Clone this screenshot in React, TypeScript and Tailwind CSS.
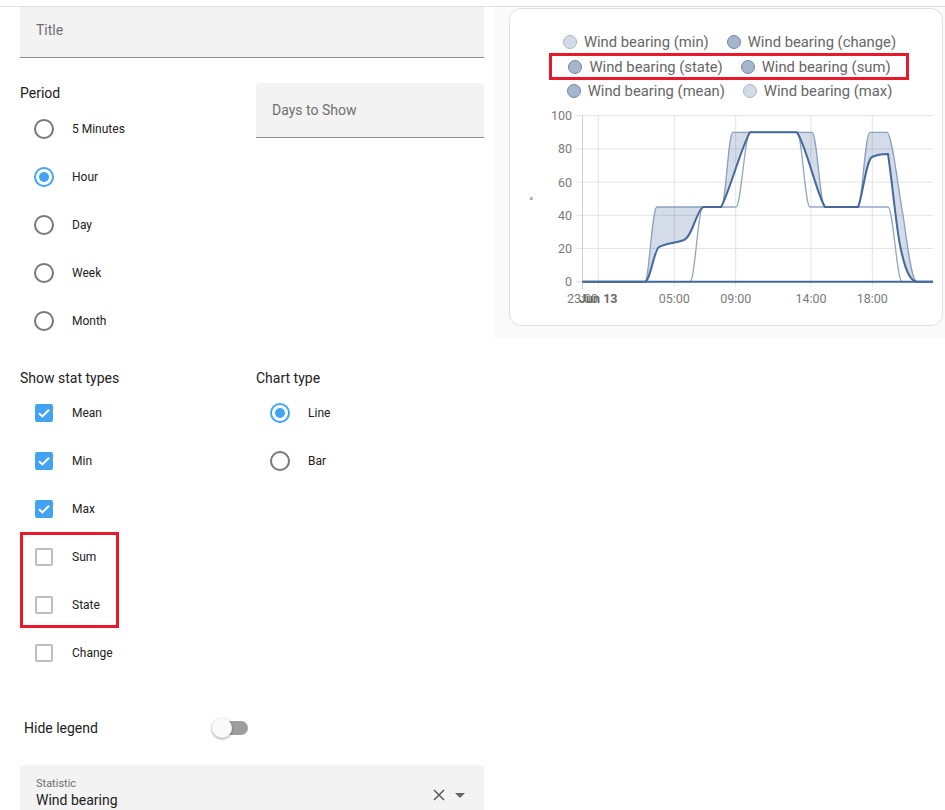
import React from "react";

const font = "font-['Roboto','Liberation_Sans',sans-serif]";

const Radio = ({ checked }: { checked?: boolean }) => (
  <span
    className={`flex h-5 w-5 items-center justify-center rounded-full border-2 ${
      checked ? "border-[#43a3f3]" : "border-[#777777]"
    }`}
  >
    {checked && <span className="h-[10px] w-[10px] rounded-full bg-[#43a3f3]" />}
  </span>
);

const Checkbox = ({ checked }: { checked?: boolean }) =>
  checked ? (
    <span className="flex h-[18px] w-[18px] items-center justify-center rounded-[2px] bg-[#43a3f3]">
      <svg viewBox="0 0 18 18" className="h-[18px] w-[18px]">
        <path d="M4 9.2 L7.4 12.4 L14 5.8" fill="none" stroke="white" strokeWidth="2" />
      </svg>
    </span>
  ) : (
    <span className="block h-[18px] w-[18px] rounded-[2px] border-2 border-[#bdbdbd]" />
  );

const RadioRow = ({ label, checked }: { label: string; checked?: boolean }) => (
  <div className="flex h-12 items-center pt-px">
    <span className="ml-[14px] flex">
      <Radio checked={checked} />
    </span>
    <span className="ml-[18px] text-xs text-[#212121]">{label}</span>
  </div>
);

const CheckRow = ({ label, checked }: { label: string; checked?: boolean }) => (
  <div className="flex h-12 items-center pt-px">
    <span className="ml-[15px] flex">
      <Checkbox checked={checked} />
    </span>
    <span className="ml-[19px] text-xs text-[#212121]">{label}</span>
  </div>
);

const legendRows: [string, boolean][][] = [
  [
    ["Wind bearing (min)", true],
    ["Wind bearing (change)", false],
  ],
  [
    ["Wind bearing (state)", false],
    ["Wind bearing (sum)", false],
  ],
  [
    ["Wind bearing (mean)", false],
    ["Wind bearing (max)", true],
  ],
];

const yTicks = [0, 20, 40, 60, 80, 100];
const yOf = (v: number) => 281.7 - 1.66 * v;
const xGrid = [598.3, 674.3, 735.7, 811, 872.3];

const maxPath =
  "M582.5,281.7 H645 C649,281.7 652,207 657,207 H721 C726,207 728,132.3 733,132.3 H812 C817,132.3 820,207 825,207 H858 C862,207 865,132.3 870,132.3 H887 C892,132.3 899,195 903,215 C907,240 911,281.7 917,281.7 H933";
const meanPath =
  "M582.5,281.7 H645 C650,281.7 654,250 659,247 C664,244 675,243 684,240 C692,237 696,212 703,207 H721 C728,196 742,145 750,132.3 H797 C806,145 817,195 825,207 H858 C862,200 866,160 872,157 C878,154 884,154 888,154 C892,180 896,225 900,245 C904,265 909,281.7 917,281.7 H933";
const minPath =
  "M582.5,281.7 H690 C695,281.7 698,207 703,207 H736 C741,207 745,132.3 750,132.3 H797 C802,132.3 805,207 810,207 H888 C893,207 897,281.7 902,281.7 H933";

const Chart = () => (
  <svg viewBox="510 103 432 207" width={432} height={207} className="block">
    <defs>
      <mask id="band">
        <path d={maxPath + " Z"} fill="white" />
        <path d={meanPath + " Z"} fill="black" />
      </mask>
    </defs>
    {yTicks.map((v) => (
      <g key={v}>
        <line x1={576} x2={933} y1={yOf(v)} y2={yOf(v)} stroke="#e3e3e3" strokeWidth={1} />
        <text x={572} y={yOf(v) + 4.5} textAnchor="end" fontSize={12.5} fill="#7a7a7a" fontFamily="Roboto, sans-serif">
          {v}
        </text>
      </g>
    ))}
    {xGrid.map((x) => (
      <line key={x} x1={x} x2={x} y1={115.7} y2={287} stroke="#e3e3e3" strokeWidth={1} />
    ))}
    <line x1={582.5} x2={582.5} y1={115.7} y2={289} stroke="#cfcfcf" strokeWidth={1} />
    <text x={529} y={206} fontSize={12} fill="#8a8a8a" fontFamily="Roboto, sans-serif">
      °
    </text>
    <rect x={580} y={110} width={360} height={180} fill="rgba(70,108,158,0.24)" mask="url(#band)" />
    <path d={minPath} fill="none" stroke="#93a7c3" strokeWidth={1.3} />
    <path d={maxPath} fill="none" stroke="#8aa0bf" strokeWidth={1.3} />
    <path d={meanPath} fill="none" stroke="#45699a" strokeWidth={2} />
    <path d="M582.5,281.7 H933" fill="none" stroke="#45699a" strokeWidth={2} />
    <g fontSize={12.5} fill="#7a7a7a" fontFamily="Roboto, sans-serif" textAnchor="middle">
      <text x={582.5} y={302.5}>23:00</text>
      <text x={598.3} y={302.5} fontWeight={700} fill="#6a6a6a">
        Jun 13
      </text>
      <text x={674.3} y={302.5}>05:00</text>
      <text x={735.7} y={302.5}>09:00</text>
      <text x={811} y={302.5}>14:00</text>
      <text x={872.3} y={302.5}>18:00</text>
    </g>
  </svg>
);

export default function App() {
  return (
    <div className={`relative h-[810px] w-[945px] overflow-hidden bg-white ${font}`}>
      <div className="h-[7px] border-b border-[#e0e0e0]" />
      <div className="flex">
        {/* editor column */}
        <div className="w-[494px] pl-5 pr-[10px]">
          <div className="h-[51px] border-b border-[#8c8c8c] bg-[#f3f3f3] pl-4 pt-[15px] text-sm leading-4 text-[#707070]">
            Title
          </div>

          <div className="mt-[25px] grid grid-cols-[236px_228px]">
            <div>
              <div className="h-5 text-sm leading-5 text-[#212121]">Period</div>
              <div className="mt-px">
                <RadioRow label="5 Minutes" />
                <RadioRow label="Hour" checked />
                <RadioRow label="Day" />
                <RadioRow label="Week" />
                <RadioRow label="Month" />
              </div>
            </div>
            <div>
              <div className="h-[55px] rounded-t-[4px] border-b border-[#8c8c8c] bg-[#f3f3f3] pl-4 pt-[19px] text-sm leading-4 text-[#707070]">
                Days to Show
              </div>
            </div>
          </div>

          <div className="mt-6 grid grid-cols-[236px_228px]">
            <div>
              <div className="h-5 text-sm leading-5 text-[#212121]">Show stat types</div>
              <CheckRow label="Mean" checked />
              <CheckRow label="Min" checked />
              <CheckRow label="Max" checked />
              <CheckRow label="Sum" />
              <CheckRow label="State" />
              <CheckRow label="Change" />
            </div>
            <div>
              <div className="h-5 text-sm leading-5 text-[#212121]">Chart type</div>
              <RadioRow label="Line" checked />
              <RadioRow label="Bar" />
            </div>
          </div>

          <div className="mt-8 flex h-10 items-center pl-1">
            <span className="w-[188px] text-sm text-[#212121]">Hide legend</span>
            <span className="relative flex h-5 w-9 items-center">
              <span className="ml-px h-[14px] w-[35px] rounded-full bg-[#9e9e9e]" />
              <span className="absolute left-0 top-0 h-5 w-5 rounded-full bg-[#fafafa] shadow-[0_1px_3px_rgba(0,0,0,0.4)]" />
            </span>
          </div>

          <div className="mt-[17px] flex h-[56px] items-start rounded-t-[4px] bg-[#f3f3f3] pl-4 pr-[19px]">
            <div className="flex-1 pt-3">
              <div className="text-[11px] leading-[13px] text-[#707070]">Statistic</div>
              <div className="text-sm leading-5 text-[#212121]">Wind bearing</div>
            </div>
            <div className="mt-[23px] flex items-center gap-[9px]">
              <svg viewBox="0 0 14 14" className="h-[14px] w-[14px]">
                <path d="M2 2 L12 12 M12 2 L2 12" stroke="#5f5f5f" strokeWidth="1.6" />
              </svg>
              <svg viewBox="0 0 10 5" className="h-[5px] w-[10px]">
                <path d="M0 0 H10 L5 5 Z" fill="#666666" />
              </svg>
            </div>
          </div>
        </div>

        {/* preview column */}
        <div className="h-[331px] flex-1 bg-[#fafafa] pl-[15px] pt-px">
          <div className="h-[318px] w-[434px] rounded-xl border border-[#e0e0e0] bg-white">
            <div className="pl-[7px] pt-[21px] text-[14.8px] text-[#666666]">
              {legendRows.map((row, i) => (
                <div key={i} className={`flex items-center justify-center gap-[18px] ${i === 1 ? "h-[25px]" : "h-6"}`}>
                  {row.map(([label, light]) => (
                    <span key={label} className="flex items-center gap-[7px]">
                      <span
                        className={`h-[14px] w-[14px] rounded-full border ${
                          light ? "border-[#a8b7cb] bg-[#d3dbe6]" : "border-[#6d88aa] bg-[#a6b5ca]"
                        }`}
                      />
                      <span className="leading-5">{label}</span>
                    </span>
                  ))}
                </div>
              ))}
            </div>
            <Chart />
          </div>
        </div>
      </div>

      {/* highlight annotations */}
      <div className="pointer-events-none absolute left-[20px] top-[532px] h-[96px] w-[99px] border-[3px] border-[#e8192c]" />
      <div className="pointer-events-none absolute left-[549px] top-[53px] h-[27px] w-[360px] border-[3px] border-[#e8192c]" />
    </div>
  );
}
